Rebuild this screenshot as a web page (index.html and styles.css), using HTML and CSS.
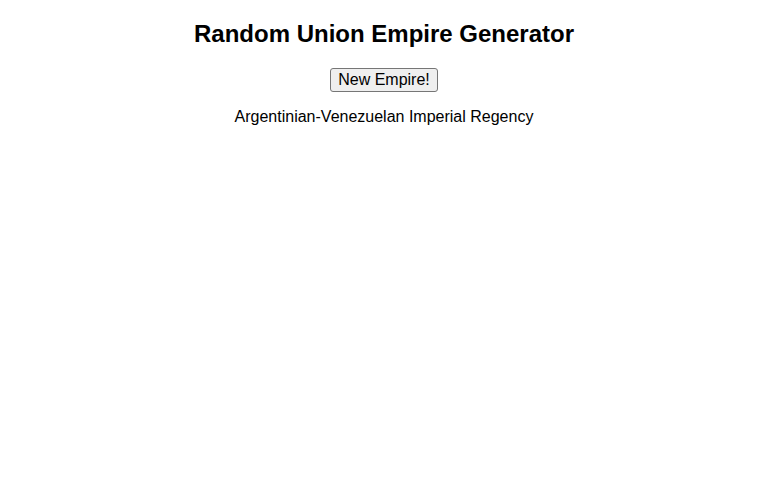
FILE: index.html
```html
<!DOCTYPE html>
<html>
<head>
  <title>Random Union Empire Generator</title>
  <meta name="viewport" content="width=device-width, initial-scale=1.0">
  <link rel="stylesheet" href="styles.css">
</head>
<body>

  <div class="generator">
    <h1>Random Union Empire Generator</h1>
    <div class="controls">
      <button id="newEmpire" onclick="generate()">New Empire!</button>
    </div>
    <p id="result">Argentinian-Venezuelan Imperial Regency</p>
  </div>

  <script>
    const peoples = ['Argentinian', 'Venezuelan', 'Brazilian', 'Chilean', 'Peruvian', 'Bolivian', 'Austrian', 'Hungarian', 'Polish', 'Lithuanian'];
    const ranks = ['Imperial', 'Royal', 'Grand', 'Holy', 'Federal'];
    const kinds = ['Regency', 'Empire', 'Commonwealth', 'Dominion', 'Union'];

    function pick(list) {
      return list[Math.floor(Math.random() * list.length)];
    }

    function generate() {
      let a = pick(peoples);
      let b = pick(peoples);
      while (b === a) b = pick(peoples);
      document.getElementById('result').textContent = a + '-' + b + ' ' + pick(ranks) + ' ' + pick(kinds);
    }
  </script>

</body>
</html>
```

FILE: styles.css
```css
body {
  font-family: "Liberation Sans", Arial, sans-serif;
  margin: 0;
  color: #000;
  background: #fff;
}

.generator {
  text-align: center;
  padding-top: 20px;
}

h1 {
  font-size: 24px;
  margin: 0 0 20px;
}

.controls {
  margin: 0;
}

button {
  font-family: "Liberation Sans", Arial, sans-serif;
  font-size: 16px;
  padding: 2px 7px;
  color: #000;
  background-color: #efefef;
  border: 1px solid #767676;
  border-radius: 3px;
  cursor: pointer;
}

button:hover {
  background-color: #e5e5e5;
}

p {
  font-size: 16px;
  margin: 16px 0;
}
```
